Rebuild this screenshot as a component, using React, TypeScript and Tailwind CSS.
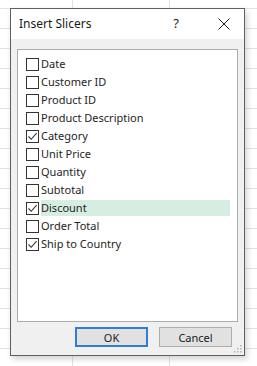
import { useState } from 'react'

const fields = [
  { name: 'Date', checked: false },
  { name: 'Customer ID', checked: false },
  { name: 'Product ID', checked: false },
  { name: 'Product Description', checked: false },
  { name: 'Category', checked: true },
  { name: 'Unit Price', checked: false },
  { name: 'Quantity', checked: false },
  { name: 'Subtotal', checked: false },
  { name: 'Discount', checked: true },
  { name: 'Order Total', checked: false },
  { name: 'Ship to Country', checked: true }
]

function CheckBox({ checked }: { checked: boolean }) {
  return (
    <span className="flex h-[13px] w-[13px] shrink-0 items-center justify-center border border-[#333] bg-white">
      {checked && (
        <svg width="11" height="11" viewBox="0 0 11 11" fill="none">
          <path d="M1.5 5.5 L4.2 8.3 L9.6 2.2" stroke="#333" strokeWidth="1.1" />
        </svg>
      )}
    </span>
  )
}

export default function App() {
  const [items, setItems] = useState(fields)
  const [active, setActive] = useState(8)

  const toggle = (i: number) => {
    setActive(i)
    setItems((prev) => prev.map((f, j) => (j === i ? { ...f, checked: !f.checked } : f)))
  }

  return (
    <div
      className="relative h-[366px] w-[257px] overflow-hidden bg-white bg-[linear-gradient(to_right,#e2e2e2_1px,transparent_1px),linear-gradient(to_bottom,#e2e2e2_1px,transparent_1px)] bg-[size:97px_20px] bg-[position:72px_8px]"
      style={{ fontFamily: '"Noto Sans", "Open Sans", Arial, sans-serif' }}
    >
      {/* dialog window */}
      <div className="absolute left-[10px] top-[8px] flex h-[348px] w-[235px] flex-col border border-[#5f5f5f] bg-[#f0f0f0] shadow-[2px_3px_6px_rgba(0,0,0,0.18)]">
        <div className="flex h-[30px] shrink-0 items-center bg-white pl-[8px] text-[12px] text-[#1a1a1a]">
          <span className="flex-1">Insert Slicers</span>
          <span className="w-[14px] text-center text-[13px]">?</span>
          <button type="button" className="ml-[34px] mr-[13px] flex h-[14px] w-[14px] items-center justify-center">
            <svg width="12" height="12" viewBox="0 0 12 12">
              <path d="M0.5 0.5 L11.5 11.5 M11.5 0.5 L0.5 11.5" stroke="#1a1a1a" strokeWidth="1" />
            </svg>
          </button>
        </div>

        <div className="flex flex-1 flex-col px-[6px] pt-[10px]">
          <div className="flex h-[273px] flex-col border border-[#adadad] bg-white pt-[5px]">
            {items.map((f, i) => (
              <div
                key={f.name}
                className="flex h-[18px] cursor-default items-center pl-[8px] pr-[7px] text-[11px] text-[#1e1e1e]"
                onClick={() => toggle(i)}
              >
                <CheckBox checked={f.checked} />
                <span
                  className={
                    i === active
                      ? 'ml-[2px] flex h-[16px] flex-1 items-center bg-[#d5eee1]'
                      : 'ml-[2px] flex h-[16px] flex-1 items-center'
                  }
                >
                  {f.name}
                </span>
              </div>
            ))}
          </div>

          <div className="mt-[5px] flex justify-end gap-[11px] pr-[6px]">
            <button
              type="button"
              className="h-[20px] w-[73px] border-2 border-[#2f7fd1] bg-[#e1e1e1] text-[11px] leading-none text-[#1a1a1a]"
            >
              OK
            </button>
            <button
              type="button"
              className="h-[20px] w-[73px] border border-[#adadad] bg-[#e1e1e1] text-[11px] leading-none text-[#1a1a1a]"
            >
              Cancel
            </button>
          </div>
        </div>

        {/* resize grip */}
        <svg className="absolute bottom-[2px] right-[2px]" width="8" height="8" viewBox="0 0 8 8">
          <rect x="6" y="0" width="1.5" height="1.5" fill="#b5b5b5" />
          <rect x="3" y="3" width="1.5" height="1.5" fill="#b5b5b5" />
          <rect x="6" y="3" width="1.5" height="1.5" fill="#b5b5b5" />
          <rect x="0" y="6" width="1.5" height="1.5" fill="#b5b5b5" />
          <rect x="3" y="6" width="1.5" height="1.5" fill="#b5b5b5" />
          <rect x="6" y="6" width="1.5" height="1.5" fill="#b5b5b5" />
        </svg>
      </div>
    </div>
  )
}
